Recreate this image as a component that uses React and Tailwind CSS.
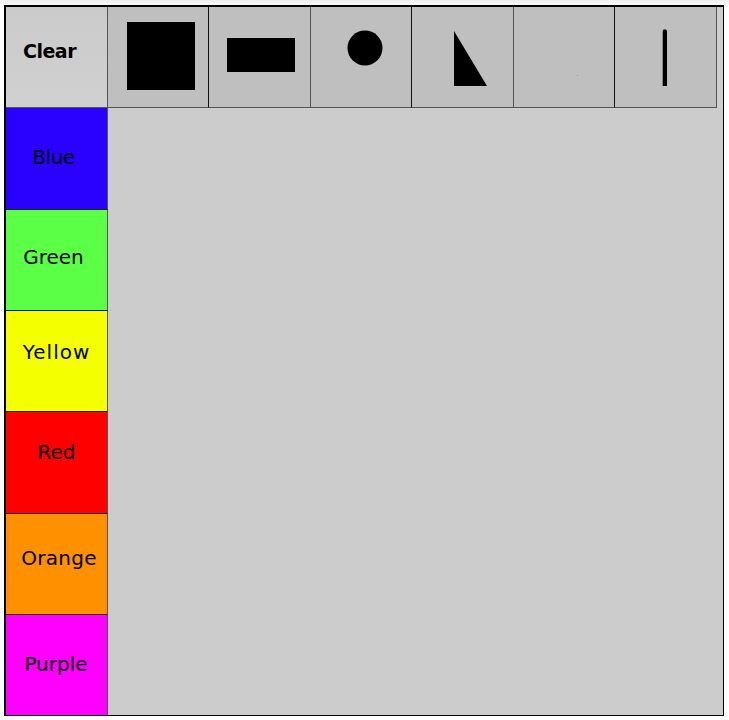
const tools = [
  { name: 'square', w: 'w-[101px]', line: 'border-r-[#111111]', shape: <rect x="19" y="15" width="68" height="68" /> },
  { name: 'rect', w: 'w-[102px]', line: 'border-r-[#555555]', shape: <rect x="18" y="31" width="68" height="34" /> },
  { name: 'circle', w: 'w-[101px]', line: 'border-r-[#111111]', shape: <circle cx="54" cy="41" r="17.5" /> },
  { name: 'triangle', w: 'w-[102px]', line: 'border-r-[#555555]', shape: <polygon points="42,24 42,79 75,79" /> },
  { name: 'dot', w: 'w-[101px]', line: 'border-r-[#111111]', shape: <rect x="63" y="68" width="1" height="1" fill="#999999" /> },
  { name: 'line', w: 'w-[102px]', line: 'border-r-[#555555]', shape: <polygon points="47.7,24 48.6,22.5 51,22.5 52,24 52,79 47.7,79" /> },
];

const colors = [
  { name: 'Blue', bg: 'bg-[#2a00ff]', pad: 'pb-[3px] pr-[6px] tracking-[-0.5px]', h: 'h-[102px]', line: 'border-b-[#222222]' },
  { name: 'Green', bg: 'bg-[#5aff46]', pad: 'pb-[6px] pr-[6px]', h: 'h-[101px]', line: 'border-b-[#111111]' },
  { name: 'Yellow', bg: 'bg-[#f4ff00]', pad: 'pb-[18px] tracking-[1px]', h: 'h-[101px]', line: 'border-b-[#222222]' },
  { name: 'Red', bg: 'bg-[#ff0000]', pad: 'pb-[21px]', h: 'h-[102px]', line: 'border-b-[#222222]' },
  { name: 'Orange', bg: 'bg-[#ff9000]', pad: 'pb-[12px] pl-[5px] tracking-[0.3px]', h: 'h-[101px]', line: 'border-b-[#222222]' },
  { name: 'Purple', bg: 'bg-[#ff00ff]', pad: 'pb-[2px] pr-[1px]', h: 'h-[100px]', line: 'border-b-transparent' },
];

const App = () => {
  return (
    <div className="w-[729px] h-[720px] bg-white overflow-hidden font-['DejaVu_Sans',sans-serif] text-black">
      <div className="h-[5px] bg-gradient-to-b from-[#eeeeee] to-[#fafafa]"></div>
      <div className="ml-[4px] w-[720px] h-[711px] border-l-2 border-t-2 border-r border-b border-black bg-[#cecece]">
        {/* Top row */}
        <div className="flex h-[101px]">
          <div className="w-[102px] shrink-0 flex items-center justify-center border-r border-b border-[#555555] bg-gradient-to-b from-[#cbcbcb] to-[#d0d0d0] pb-[11px] pr-[14px] text-[19px] font-bold tracking-[-0.5px]">
            Clear
          </div>
          {tools.map((tool) => (
            <div key={tool.name} className={`${tool.w} shrink-0 bg-[#bfbfbf] border-r border-b border-b-[#555555] ${tool.line}`}>
              <svg width="100" height="100" viewBox="0 0 100 100" className="block">
                {tool.shape}
              </svg>
            </div>
          ))}
        </div>

        {/* Colors + canvas */}
        <div className="flex h-[607px]">
          <div className="w-[102px] shrink-0 flex flex-col">
            {colors.map((c) => (
              <div
                key={c.name}
                className={`${c.h} ${c.bg} ${c.pad} ${c.line} flex items-center justify-center border-b border-r border-r-[#555555] text-[20px]`}
              >
                {c.name}
              </div>
            ))}
          </div>
          <div className="flex-1 bg-[#cccccc]"></div>
        </div>
      </div>
    </div>
  );
};

export default App;
